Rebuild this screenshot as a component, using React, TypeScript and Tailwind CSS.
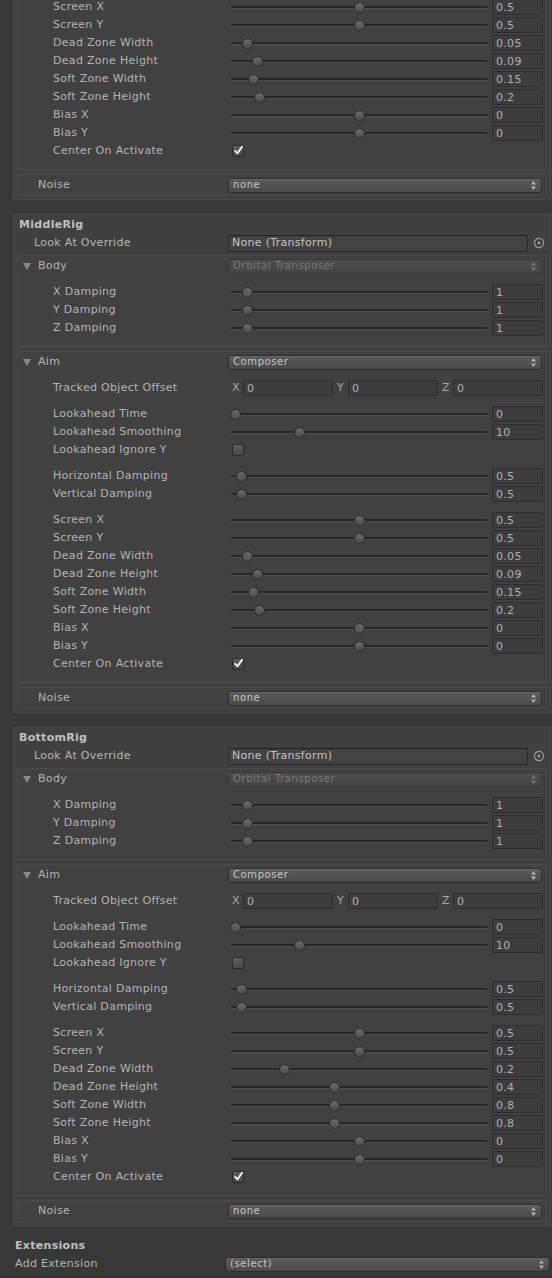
import React from 'react';

type Item =
  | { kind: 'slider'; label: string; value: string; f: number }
  | { kind: 'check'; label: string; checked: boolean }
  | { kind: 'vec3'; label: string };

const damping: Item[] = [
  { kind: 'slider', label: 'X Damping', value: '1', f: 0.05 },
  { kind: 'slider', label: 'Y Damping', value: '1', f: 0.05 },
  { kind: 'slider', label: 'Z Damping', value: '1', f: 0.05 },
];

const zones = (dzw: string, dzh: string, szw: string, szh: string): Item[] => [
  { kind: 'slider', label: 'Screen X', value: '0.5', f: 0.5 },
  { kind: 'slider', label: 'Screen Y', value: '0.5', f: 0.5 },
  { kind: 'slider', label: 'Dead Zone Width', value: dzw, f: parseFloat(dzw) },
  { kind: 'slider', label: 'Dead Zone Height', value: dzh, f: parseFloat(dzh) },
  { kind: 'slider', label: 'Soft Zone Width', value: szw, f: parseFloat(szw) / 2 },
  { kind: 'slider', label: 'Soft Zone Height', value: szh, f: parseFloat(szh) / 2 },
  { kind: 'slider', label: 'Bias X', value: '0', f: 0.5 },
  { kind: 'slider', label: 'Bias Y', value: '0', f: 0.5 },
  { kind: 'check', label: 'Center On Activate', checked: true },
];

const aimGroups = (z: Item[]): Item[][] => [
  [{ kind: 'vec3', label: 'Tracked Object Offset' }],
  [
    { kind: 'slider', label: 'Lookahead Time', value: '0', f: 0 },
    { kind: 'slider', label: 'Lookahead Smoothing', value: '10', f: 7 / 27 },
    { kind: 'check', label: 'Lookahead Ignore Y', checked: false },
  ],
  [
    { kind: 'slider', label: 'Horizontal Damping', value: '0.5', f: 0.025 },
    { kind: 'slider', label: 'Vertical Damping', value: '0.5', f: 0.025 },
  ],
  z,
];

const rigs = [
  { name: 'MiddleRig', aim: aimGroups(zones('0.05', '0.09', '0.15', '0.2')) },
  { name: 'BottomRig', aim: aimGroups(zones('0.2', '0.4', '0.8', '0.8')) },
];

function Arrows({ dim }: { dim?: boolean }) {
  return (
    <svg width="5" height="9" viewBox="0 0 5 9" className="absolute right-[5px] top-[2px]">
      <path d="M2.5 0L5 3.5H0Z M0 5.5H5L2.5 9Z" fill={dim ? '#777' : '#b0b0b0'} />
    </svg>
  );
}

function Dropdown({ text, disabled, className = '' }: { text: string; disabled?: boolean; className?: string }) {
  return (
    <div
      className={`relative flex h-[15px] shrink-0 items-center rounded-[3px] border pl-[4px] text-[10px] leading-none tracking-[0.6px] ${
        disabled
          ? 'border-[#393939] bg-linear-to-b from-[#4c4c4c] to-[#454545] text-[#7a7a7a]'
          : 'border-[#2c2c2c] bg-linear-to-b from-[#5b5b5b] to-[#4a4a4a] text-[#c6c6c6] shadow-[inset_0_1px_0_#676767]'
      } ${className}`}
    >
      {text}
      <Arrows dim={disabled} />
    </div>
  );
}

function NumberField({ children, className = '' }: { children: React.ReactNode; className?: string }) {
  return (
    <div
      className={`flex h-[16px] items-center border border-[#2d2d2d] bg-[#3d3d3d] pl-[3px] text-[11px] leading-none text-[#b0b0b0] ${className}`}
    >
      {children}
    </div>
  );
}

function Slider({ f, value }: { f: number; value: string }) {
  return (
    <>
      <div className="relative h-[18px] w-[260px] shrink-0">
        <div className="absolute left-[3px] right-0 top-[8px] h-[3px] rounded-full border-b border-[#4f4f4f] bg-[#262626]" />
        <div
          className="absolute top-[4px] h-[11px] w-[11px] rounded-full border border-[#2c2c2c] bg-linear-to-b from-[#6a6a6a] to-[#4d4d4d]"
          style={{ left: Math.round(1.5 + f * 248) }}
        />
      </div>
      <NumberField className="ml-[4px] w-[51px]">{value}</NumberField>
    </>
  );
}

function Check({ checked }: { checked: boolean }) {
  return (
    <div className="ml-[4px] flex h-[12px] w-[12px] items-center justify-center rounded-[2px] border border-[#2a2a2a] bg-linear-to-b from-[#5e5e5e] to-[#474747]">
      {checked && (
        <svg width="11" height="11" viewBox="0 0 11 11" className="-mt-[2px] ml-[1px]">
          <path d="M1.5 6L4.3 9L9.8 1" fill="none" stroke="#ffffff" strokeWidth="2.2" strokeLinecap="round" strokeLinejoin="round" />
        </svg>
      )}
    </div>
  );
}

function Vec3() {
  return (
    <div className="grid w-[315px] grid-cols-3">
      {['X', 'Y', 'Z'].map((a) => (
        <div key={a} className="flex items-center">
          <span className="w-[15px] shrink-0 pl-[4px] text-[11px] text-[#a8a8a8]">{a}</span>
          <NumberField className="flex-1">0</NumberField>
        </div>
      ))}
    </div>
  );
}

function Row({ item }: { item: Item }) {
  return (
    <div className="flex h-[18px] items-center pr-[3px]">
      <div className="w-[210px] shrink-0 whitespace-nowrap pl-[35px]">{item.label}</div>
      <div className="flex w-[315px] items-center">
        {item.kind === 'slider' && <Slider f={item.f} value={item.value} />}
        {item.kind === 'check' && <Check checked={item.checked} />}
        {item.kind === 'vec3' && <Vec3 />}
      </div>
    </div>
  );
}

function Triangle() {
  return (
    <svg width="8" height="7" viewBox="0 0 8 7">
      <path d="M0 0H8L4 7Z" fill="#8a8a8a" />
    </svg>
  );
}

function Groups({ groups }: { groups: Item[][] }) {
  return (
    <>
      {groups.map((g, i) => (
        <div key={i} className="mt-[8px] first:mt-0">
          {g.map((it) => (
            <Row key={it.label} item={it} />
          ))}
        </div>
      ))}
    </>
  );
}

function Foldout({ title, dropdown, disabled, groups }: { title: string; dropdown: string; disabled?: boolean; groups: Item[][] }) {
  return (
    <div className="mx-[3px] border border-[#4b4b4b] bg-[#414141] pb-[9px] pt-[1px]">
      <div className="mb-[8px] flex h-[18px] items-center pr-[3px]">
        <div className="flex w-[210px] shrink-0 items-center pl-[5px]">
          <Triangle />
          <span className="ml-[7px]">{title}</span>
        </div>
        <Dropdown text={dropdown} disabled={disabled} className="w-[314px]" />
      </div>
      <Groups groups={groups} />
    </div>
  );
}

function Noise() {
  return (
    <div className="mx-[3px] mt-[4px] border border-[#4b4b4b] bg-[#414141] py-[1px]">
      <div className="flex h-[18px] items-center pr-[3px]">
        <div className="w-[210px] shrink-0 pl-[20px]">Noise</div>
        <Dropdown text="none" className="w-[314px]" />
      </div>
    </div>
  );
}

function Rig({ name, aim }: { name: string; aim: Item[][] }) {
  return (
    <div className="ml-[13px] w-[538px] border border-[#4a4a4a] bg-[#404040] pb-[3px] pt-[1px]">
      <div className="flex h-[18px] items-center pl-[5px] font-bold text-[#c0c0c0]">{name}</div>
      <div className="flex h-[18px] items-center">
        <div className="w-[214px] shrink-0 pl-[20px]">Look At Override</div>
        <div className="flex h-[17px] w-[300px] items-center border border-[#2a2a2a] border-t-[#1f1f1f] bg-[#434343] pl-[3px] text-[#c4c4c4]">
          None (Transform)
        </div>
        <svg width="12" height="12" viewBox="0 0 12 12" className="ml-[5px]">
          <circle cx="6" cy="6" r="4.6" fill="none" stroke="#9c9c9c" strokeWidth="1.2" />
          <circle cx="6" cy="6" r="1.4" fill="#9c9c9c" />
        </svg>
      </div>
      <div className="mt-[3px]">
        <Foldout title="Body" dropdown="Orbital Transposer" disabled groups={[damping]} />
      </div>
      <div className="mt-[4px]">
        <Foldout title="Aim" dropdown="Composer" groups={aim} />
      </div>
      <Noise />
    </div>
  );
}

// the inspector is scrolled: only the tail of TopRig's Aim section is in view
function RigTail({ groups }: { groups: Item[][] }) {
  return (
    <div className="-mt-[2px] ml-[13px] w-[538px] border-x border-b border-[#4a4a4a] bg-[#404040] pb-[3px]">
      <div className="mx-[3px] border-x border-b border-[#4b4b4b] bg-[#414141] pb-[9px]">
        <Groups groups={groups} />
      </div>
      <Noise />
    </div>
  );
}

export default function App() {
  return (
    <div className="h-[1278px] w-[552px] overflow-hidden bg-[#383838] font-['DejaVu_Sans',sans-serif] text-[11px] tracking-[0.3px] text-[#b4b4b4]">
      <div className="flex flex-col gap-[14px]">
        <RigTail groups={[zones('0.05', '0.09', '0.15', '0.2')]} />
        {rigs.map((r) => (
          <Rig key={r.name} name={r.name} aim={r.aim} />
        ))}
      </div>
      <div className="mt-[11px]">
        <div className="flex h-[18px] items-center pl-[15px] font-bold text-[#c0c0c0]">Extensions</div>
        <div className="flex h-[18px] items-center">
          <div className="w-[225px] shrink-0 pl-[15px]">Add Extension</div>
          <Dropdown text="(select)" className="w-[325px]" />
        </div>
      </div>
      <div className="mt-[3px] h-[1px] bg-[#2e2e2e]" />
    </div>
  );
}
